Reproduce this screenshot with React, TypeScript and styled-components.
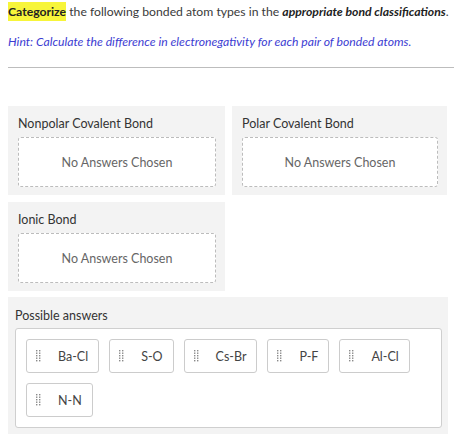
import React from 'react';
import styled, { createGlobalStyle } from 'styled-components';

const GlobalStyle = createGlobalStyle`
  body {
    margin: 0;
    background: #ffffff;
    font-family: Lato, "Open Sans", sans-serif;
    color: #333333;
  }
`;

const Page = styled.div`
  width: 474px;
  padding: 3px 8px 0 8px;
  box-sizing: border-box;
`;

const Prompt = styled.p`
  margin: 0;
  font-size: 12.2px;
  line-height: 18px;
  color: #3a3a3a;
  white-space: nowrap;
`;

const Highlight = styled.strong`
  background: #f7f53a;
  color: #222222;
  font-weight: 700;
  padding: 2px 0;
`;

const Emph = styled.em`
  font-weight: 700;
  color: #222222;
`;

const Hint = styled.p`
  margin: 12px 0 0 0;
  font-size: 12.2px;
  line-height: 18px;
  font-style: italic;
  color: #3c3cd2;
  white-space: nowrap;
`;

const Rule = styled.hr`
  margin: 16px 0 0 0;
  width: 446px;
  border: none;
  border-top: 1px solid #bdbdbd;
  height: 0;
`;

const Buckets = styled.div`
  display: grid;
  grid-template-columns: 217px 215px;
  gap: 7px;
  margin-top: 38px;
`;

const Bucket = styled.div`
  background: #f3f3f3;
  padding: 10px 9px 8px 10px;
`;

const BucketTitle = styled.div`
  font-size: 12.5px;
  line-height: 16px;
  color: #333333;
`;

const DropZone = styled.div`
  margin-top: 5px;
  height: 50px;
  border: 1px dashed #bcbcbc;
  border-radius: 3px;
  background: #ffffff;
  box-sizing: border-box;
  display: flex;
  align-items: center;
  justify-content: center;
  font-size: 12.5px;
  color: #666666;
`;

const AnswerPool = styled.div`
  margin-top: 6px;
  width: 440px;
  background: #f3f3f3;
  padding: 11px 6px 6px 7px;
  box-sizing: border-box;
`;

const PoolTitle = styled.div`
  font-size: 12.5px;
  line-height: 16px;
  color: #333333;
`;

const PoolBox = styled.div`
  margin-top: 4px;
  background: #ffffff;
  border: 1px solid #cfcfcf;
  border-radius: 3px;
  padding: 10px;
  display: flex;
  flex-wrap: wrap;
  gap: 10px 10px;
`;

const Chip = styled.div`
  height: 34px;
  box-sizing: border-box;
  border: 1px solid #cccccc;
  border-radius: 3px;
  background: #ffffff;
  display: flex;
  align-items: center;
  padding: 0 10px 0 9px;
  font-size: 12.5px;
  color: #444444;
`;

const ChipLabel = styled.span`
  margin-left: 17px;
`;

const Grip = () => (
  <svg width="5" height="12" viewBox="0 0 5 12">
    {[0, 1, 2, 3, 4].map((r) =>
      [0, 1].map((c) => (
        <rect key={`${r}-${c}`} x={c * 3} y={r * 2.5} width="1.4" height="1.4" fill="#8a8a8a" />
      ))
    )}
  </svg>
);

const answers = ['Ba-Cl', 'S-O', 'Cs-Br', 'P-F', 'Al-Cl', 'N-N'];

const buckets = ['Nonpolar Covalent Bond', 'Polar Covalent Bond', 'Ionic Bond'];

export default function App() {
  return (
    <Page>
      <GlobalStyle />
      <Prompt>
        <Highlight>Categorize</Highlight> the following bonded atom types in the{' '}
        <Emph>appropriate bond classifications</Emph>.
      </Prompt>
      <Hint>Hint: Calculate the difference in electronegativity for each pair of bonded atoms.</Hint>
      <Rule />
      <Buckets>
        {buckets.map((b) => (
          <Bucket key={b}>
            <BucketTitle>{b}</BucketTitle>
            <DropZone>No Answers Chosen</DropZone>
          </Bucket>
        ))}
      </Buckets>
      <AnswerPool>
        <PoolTitle>Possible answers</PoolTitle>
        <PoolBox>
          {answers.map((a) => (
            <Chip key={a}>
              <Grip />
              <ChipLabel>{a}</ChipLabel>
            </Chip>
          ))}
        </PoolBox>
      </AnswerPool>
    </Page>
  );
}
